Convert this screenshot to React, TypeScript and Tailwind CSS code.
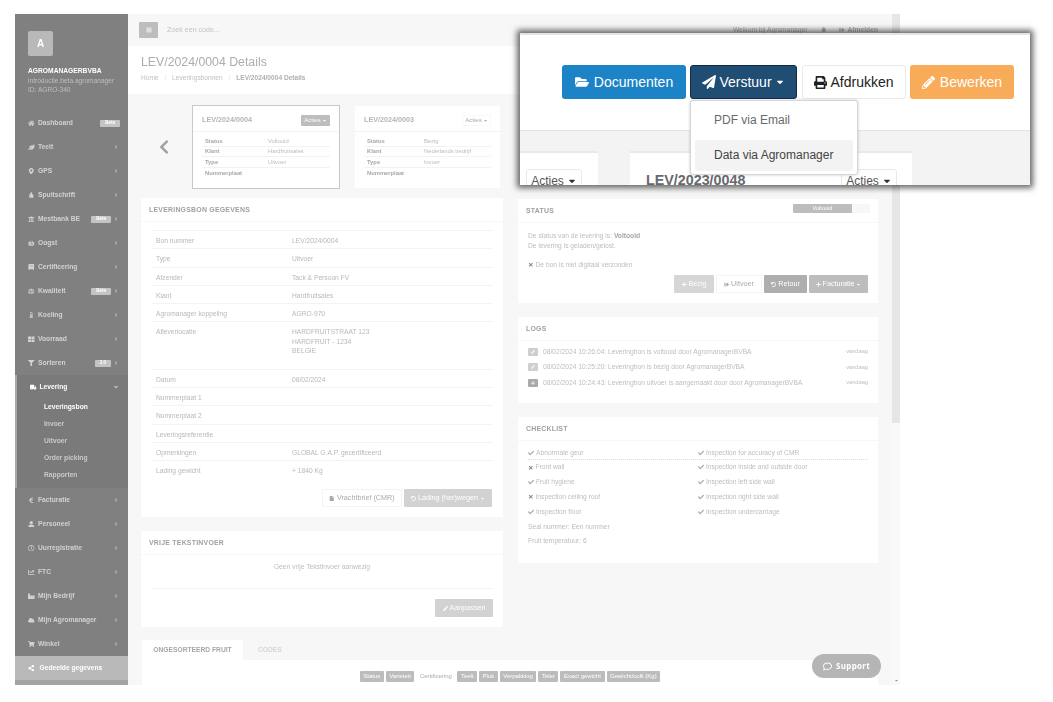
import type { ReactNode } from "react";
import {
  FaAngleDown, FaAngleLeft, FaBalanceScale, FaBars, FaBook, FaCaretDown, FaChartLine, FaCheck, FaChevronLeft, FaCloud,
  FaEuroSign, FaFile, FaFilter, FaFolderOpen, FaHome, FaIndustry, FaLeaf, FaMapMarkerAlt, FaPaperPlane, FaPencilAlt,
  FaPlus, FaPrint, FaRegClock, FaRegComment, FaShareAlt, FaShoppingBasket, FaShoppingCart, FaSignOutAlt, FaThLarge,
  FaThermometerHalf, FaTimes, FaTint, FaTruck, FaUndo, FaUniversity, FaUser, FaArrowLeft, FaBell,
} from "react-icons/fa";

const Item = ({ icon, label, badge, wide }: { icon: ReactNode; label: string; badge?: string; wide?: boolean }) => (
  <div className="h-6 flex items-center pl-[13px] pr-[9px] text-[6.7px] font-bold text-[#d2d2d2]">
    <span className="text-[6.5px] mr-[3px] flex w-[7px] justify-center">{icon}</span>
    <span>{label}</span>
    <span className="flex-1" />
    {badge && (
      <span className={`${wide ? "mr-[2px]" : "-mr-px"} h-[7px] px-[5px] rounded-[1px] bg-[#c4c4c4] text-white text-[4.5px] flex items-center`}>{badge}</span>
    )}
    {wide !== false && <FaAngleLeft className="text-[6px] text-[#b5b5b5]" />}
  </div>
);

const Sidebar = () => (
  <aside className="w-[113px] shrink-0 h-full bg-[#808080] flex flex-col">
    <div className="h-[97px] pl-[13px] pt-[17px]">
      <div className="w-[25px] h-[25px] rounded-[2px] bg-[#b9b9b9] text-white font-bold text-[10px] flex items-center justify-center">A</div>
      <p className="mt-[10px] text-[6.7px] leading-[9.5px] font-bold text-white">AGROMANAGERBVBA</p>
      <p className="text-[6.6px] leading-[9.5px] text-[#bdbdbd]">introductie.beta.agromanager</p>
      <p className="text-[6.6px] leading-[9.5px] text-[#bdbdbd]">ID: AGRO-340</p>
    </div>
    <Item icon={<FaHome />} label="Dashboard" badge="Beta" wide={false} />
    <Item icon={<FaLeaf />} label="Teelt" />
    <Item icon={<FaMapMarkerAlt />} label="GPS" />
    <Item icon={<FaTint />} label="Spuitschrift" />
    <Item icon={<FaUniversity />} label="Mestbank BE" badge="Bèta" wide />
    <Item icon={<FaShoppingBasket />} label="Oogst" />
    <Item icon={<FaBook />} label="Certificering" />
    <Item icon={<FaBalanceScale />} label="Kwaliteit" badge="Bèta" wide />
    <Item icon={<FaThermometerHalf />} label="Koeling" />
    <Item icon={<FaThLarge />} label="Voorraad" />
    <Item icon={<FaFilter />} label="Sorteren" badge="2.0" wide />
    <div className="h-[113px] bg-[#7a7a7a] border-l-[2px] border-[#a9a9a9]">
      <div className="h-6 flex items-center pl-[13px] pr-[9px] text-[6.7px] font-bold text-white">
        <FaTruck className="text-[6.5px] mr-[3px]" />
        <span className="flex-1">Levering</span>
        <FaAngleDown className="text-[6px] text-[#d0d0d0]" />
      </div>
      {["Leveringsbon", "Invoer", "Uitvoer", "Order picking", "Rapporten"].map((s, i) => (
        <div key={s} className={`h-[17px] flex items-center pl-[27px] text-[6.7px] font-bold ${i === 0 ? "text-white" : "text-[#c9c9c9]"}`}>{s}</div>
      ))}
    </div>
    <Item icon={<FaEuroSign />} label="Facturatie" />
    <Item icon={<FaUser />} label="Personeel" />
    <Item icon={<FaRegClock />} label="Uurregistratie" />
    <Item icon={<FaChartLine />} label="FTC" />
    <Item icon={<FaIndustry />} label="Mijn Bedrijf" />
    <Item icon={<FaCloud />} label="Mijn Agromanager" />
    <Item icon={<FaShoppingCart />} label="Winkel" />
    <div className="h-6 shrink-0 flex items-center pl-[13px] bg-[#b9b9b9] text-[6.7px] font-bold text-white">
      <FaShareAlt className="text-[6.5px] mr-[5px]" /> Gedeelde gegevens
    </div>
    <div className="flex-1 bg-[#a3a3a3]" />
  </aside>
);

const MiniRow = ({ label, value, last, active }: { label: string; value?: string; last?: boolean; active?: boolean }) => (
  <div className={`h-[10.7px] flex items-center pl-[3px] text-[5.8px] ${last ? "" : "border-b border-[#f2f2f2]"}`}>
    <span className={`${active ? "w-[63px]" : "w-[57px]"} font-bold text-[#a8a8a8]`}>{label}</span>
    <span className="text-[#bcbcbc]">{value}</span>
  </div>
);

const MiniCard = ({ code, rows, active }: { code: string; rows: string[]; active?: boolean }) => (
  <div className={`bg-white ${active ? "w-[148px] h-[84px] border border-[#c9c9c9]" : "w-[145px] h-[82px] mt-px"}`}>
    <div className="h-[26px] pt-[3px] flex items-center justify-between px-[9px] border-b border-[#f2f2f2]">
      <span className="text-[7.2px] font-bold text-[#b5b5b5]">{code}</span>
      {active ? (
        <span className="h-[11px] w-[29px] rounded-[1px] bg-[#bdbdbd] text-white text-[6px] flex items-center justify-center gap-px">
          Acties <FaCaretDown className="text-[5px]" />
        </span>
      ) : (
        <span className="h-[11px] w-[29px] border border-[#f8f8f8] text-[#aaa] text-[6px] flex items-center justify-center gap-px">
          Acties <FaCaretDown className="text-[5px]" />
        </span>
      )}
    </div>
    <div className="px-[9px] pt-[4px]">
      <MiniRow active={active} label="Status" value={rows[0]} />
      <MiniRow active={active} label="Klant" value={rows[1]} />
      <MiniRow active={active} label="Type" value={rows[2]} />
      <MiniRow active={active} label="Nummerplaat" last />
    </div>
  </div>
);

const Panel = ({ title, className, children }: { title: string; className: string; children: ReactNode }) => (
  <section className={`bg-white flex flex-col ${className}`}>
    <h2 className="h-[24px] pt-[2px] shrink-0 flex items-center pl-2 border-b border-[#f7f7f7] text-[6.9px] font-bold tracking-[0.25px] text-[#a0a0a0]">{title}</h2>
    {children}
  </section>
);

const Row = ({ label, children, tall }: { label: string; children?: ReactNode; tall?: boolean }) => (
  <div className={`flex border-t border-[#f3f3f3] pt-[5px] text-[6.7px] leading-[9.5px] text-[#b8b8b8] ${tall ? "h-[47.5px]" : "h-[18.25px]"}`}>
    <span className="w-[141px] pl-[5px] shrink-0">{label}</span>
    <span>{children}</span>
  </div>
);

const SoftBtn = ({ children, className }: { children: ReactNode; className: string }) => (
  <span className={`h-[18px] rounded-[1px] text-[7.2px] flex items-center justify-center gap-[2px] ${className}`}>{children}</span>
);

const Check = ({ label, off }: { label: string; off?: boolean }) => (
  <p className="h-[14.8px] flex items-center gap-[2px] text-[6.7px] text-[#bdbdbd]">
    {off ? <FaTimes className="text-[5.5px] text-[#888]" /> : <FaCheck className="text-[6px] text-[#aaa]" />}
    {label}
  </p>
);

const LogLine = ({ text, plus }: { text: string; plus?: boolean }) => (
  <div className="h-[15.5px] flex items-center text-[6.7px] text-[#bdbdbd]">
    <span className={`w-[10px] h-[8px] rounded-[1px] mr-[5px] flex items-center justify-center text-white text-[4px] ${plus ? "bg-[#aaaaaa]" : "bg-[#cfcfcf]"}`}>
      {plus ? <FaPlus /> : <FaPencilAlt />}
    </span>
    <span className="flex-1">{text}</span>
    <span className="text-[5.7px]">vandaag</span>
  </div>
);

const Tag = ({ label, plain }: { label: string; plain?: boolean }) => (
  <span className={`h-[11px] px-[3.5px] rounded-[1px] text-[6px] flex items-center ${plain ? "bg-white text-[#aaa]" : "bg-[#bcbcbc] text-white"}`}>{label}</span>
);

const Main = () => (
  <div className="flex-1 min-w-0 h-full flex flex-col bg-[#f7f7f7] overflow-hidden">
    <div className="h-[32px] shrink-0 flex items-center pl-[11px] pr-[14px]">
      <span className="w-[19px] h-[16px] rounded-[1px] bg-[#bdbdbd] text-white text-[6px] flex items-center justify-center"><FaBars /></span>
      <span className="ml-[9px] text-[7.1px] text-[#c4c4c4]">Zoek een code...</span>
      <span className="flex-1" />
      <span className="text-[6.7px] text-[#b0b0b0]">Welkom bij Agromanager</span>
      <FaBell className="mx-[13px] text-[5.5px] text-[#b0b0b0]" />
      <FaSignOutAlt className="mr-[3px] text-[5.5px] text-[#b0b0b0]" />
      <span className="text-[6.7px] font-bold text-[#b0b0b0]">Afmelden</span>
    </div>
    <div className="h-[48px] shrink-0 bg-white pl-[13px] pt-[9px]">
      <h1 className="text-[12.3px] leading-[14px] text-[#adadad]">LEV/2024/0004 Details</h1>
      <p className="mt-[4px] text-[6.6px] leading-[9px] text-[#c0c0c0]">
        Home <span className="mx-[4px] text-[#ddd]">/</span> Leveringsbonnen <span className="mx-[4px] text-[#ddd]">/</span> <b className="text-[#b0b0b0]">LEV/2024/0004 Details</b>
      </p>
    </div>
    <div className="flex-1 px-[13px] flex gap-[15px] items-start">
      <div className="w-[362px] shrink-0 flex flex-col">
        <div className="h-[104px] pt-[11px] flex">
          <div className="w-[51px] h-[84px] flex items-center pl-[15px] text-[#a2a2a2] text-[16px]"><FaChevronLeft /></div>
          <MiniCard code="LEV/2024/0004" rows={["Voltooid", "Hardfruitsales", "Uitvoer"]} active />
          <span className="w-[15px]" />
          <MiniCard code="LEV/2024/0003" rows={["Bezig", "Nederlands bedrijf", "Invoer"]} />
        </div>
        <Panel title="LEVERINGSBON GEGEVENS" className="h-[319px]">
          <div className="px-[10px] pt-[8px]">
            <Row label="Bon nummer">LEV/2024/0004</Row>
            <Row label="Type">Uitvoer</Row>
            <Row label="Afzender">Tack &amp; Persoon FV</Row>
            <Row label="Klant">Hardfruitsales</Row>
            <Row label="Agromanager koppeling">AGRO-970</Row>
            <Row label="Afleverlocatie" tall>HARDFRUITSTRAAT 123<br />HARDFRUIT - 1234<br />BELGIE</Row>
            <Row label="Datum">08/02/2024</Row>
            <Row label="Nummerplaat 1" />
            <Row label="Nummerplaat 2" />
            <Row label="Leveringsreferentie" />
            <Row label="Opmerkingen">GLOBAL G.A.P. gecertificeerd</Row>
            <Row label="Lading gewicht">+ 1840 Kg</Row>
          </div>
          <div className="mt-[11px] px-[11px] flex justify-end gap-[2px]">
            <SoftBtn className="w-[80px] bg-white border border-[#f3f3f3] text-[#aaa]"><FaFile className="text-[5.5px]" /> Vrachtbrief (CMR)</SoftBtn>
            <SoftBtn className="w-[88px] bg-[#d2d2d2] text-white"><FaUndo className="text-[5px]" /> Lading (her)wegen <FaCaretDown className="text-[5px]" /></SoftBtn>
          </div>
        </Panel>
        <Panel title="VRIJE TEKSTINVOER" className="mt-[14px] h-[96px]">
          <p className="pt-[7px] text-center text-[6.7px] text-[#bdbdbd]">Geen vrije Tekstinvoer aanwezig</p>
          <div className="mt-[16px] mx-[10px] border-t border-[#f3f3f3] pt-[10px] flex justify-end">
            <SoftBtn className="w-[58px] bg-[#d2d2d2] text-white"><FaPencilAlt className="text-[5px]" /> Aanpassen</SoftBtn>
          </div>
        </Panel>
      </div>
      <div className="w-[360px] shrink-0 flex flex-col pt-[105px]">
        <Panel title="STATUS" className="h-[104px]">
          <div className="-mt-[19px] ml-auto mr-[8px] w-[77px] h-[9px] bg-[#f7f7f7] mb-[10px]">
            <div className="w-[59px] h-full rounded-[1px] bg-[#bdbdbd] text-white text-[5.6px] flex items-center justify-center">Voltooid</div>
          </div>
          <div className="px-[10px] pt-[8px] text-[6.7px] leading-[9.5px] text-[#bdbdbd]">
            <p>De status van de levering is: <b className="text-[#a5a5a5]">Voltooid</b></p>
            <p>De levering is geladen/gelost.</p>
            <p className="mt-[9.5px] flex items-center gap-[2px]"><FaTimes className="text-[5.5px] text-[#888]" /> De bon is niet digitaal verzonden</p>
          </div>
          <div className="mt-[6px] pr-[10px] flex justify-end gap-[2px]">
            <SoftBtn className="w-[40px] bg-[#d6d6d6] text-white"><FaArrowLeft className="text-[5px]" /> Bezig</SoftBtn>
            <SoftBtn className="w-[46px] bg-white border border-[#f3f3f3] text-[#aaa]"><FaSignOutAlt className="text-[5px]" /> Uitvoer</SoftBtn>
            <SoftBtn className="w-[43px] bg-[#aeaeae] text-white"><FaUndo className="text-[5px]" /> Retour</SoftBtn>
            <SoftBtn className="w-[59px] bg-[#bdbdbd] text-white"><FaPlus className="text-[5px]" /> Facturatie <FaCaretDown className="text-[5px]" /></SoftBtn>
          </div>
        </Panel>
        <Panel title="LOGS" className="mt-[14px] h-[86px]">
          <div className="px-[10px] pt-[3px]">
            <LogLine text="08/02/2024 10:26:04: Leveringbon is voltooid door AgromanagerBVBA" />
            <LogLine text="08/02/2024 10:25:20: Leveringbon is bezig door AgromanagerBVBA" />
            <LogLine plus text="08/02/2024 10:24:43: Leveringbon uitvoer is aangemaakt door door AgromanagerBVBA" />
          </div>
        </Panel>
        <Panel title="CHECKLIST" className="mt-[14px] h-[146px]">
          <div className="px-[10px] pt-[5px] grid grid-cols-2 gap-x-0">
            <div className="col-span-2 grid grid-cols-2 border-b border-dotted border-[#dcdcdc] h-[14px]">
              <Check label="Abnormale geur" />
              <Check label="Inspection for accuracy of CMR" />
            </div>
            <Check off label="Front wall" />
            <Check label="Inspection inside and outside door" />
            <Check label="Fruit hygiene" />
            <Check label="Inspection left side wall" />
            <Check off label="Inspection ceiling roof" />
            <Check label="Inspection right side wall" />
            <Check label="Inspection floor" />
            <Check label="Inspection undercarriage" />
            <p className="col-span-2 h-[14.8px] flex items-center text-[6.7px] text-[#bdbdbd]">Seal nummer: Een nummer</p>
            <p className="col-span-2 h-[14.8px] flex items-center text-[6.7px] text-[#bdbdbd]">Fruit temperatuur: 6</p>
          </div>
        </Panel>
      </div>
    </div>
  </div>
);

const Tabs = () => (
  <div className="absolute left-[127px] top-[626px] w-[736px] h-[45px] flex flex-col">
    <div className="h-[20px] flex items-center text-[6.7px] font-bold">
      <span className="w-[101px] h-full bg-white flex items-center justify-center text-[#a6a6a6]">ONGESORTEERD FRUIT</span>
      <span className="ml-[15px] text-[#d5d5d5]">CODES</span>
    </div>
    <div className="flex-1 bg-white flex justify-center gap-[2px] pt-[11px]">
      {["Status", "Varieteit"].map(t => <Tag key={t} label={t} />)}
      <Tag plain label="Certificering" />
      {["Teelt", "Pluk", "Verpakking", "Teler", "Exact gewicht", "Gewicht/colli (Kg)"].map(t => <Tag key={t} label={t} />)}
    </div>
  </div>
);

const Popup = () => (
  <div className="absolute left-[520px] top-[33px] w-[510px] h-[152px] bg-white border-t-2 border-[#e4e4e4] shadow-[0_0_6px_3px_rgba(0,0,0,0.6)] font-['Liberation_Sans',sans-serif] overflow-hidden flex flex-col">
    <div className="h-[95px] shrink-0 pt-[30px] pr-[16px] flex justify-end">
      <button className="w-[124px] h-[34px] rounded-[3px] bg-[#1c84c6] text-white text-[14px] flex items-center justify-center gap-[5px]"><FaFolderOpen className="text-[14px]" /> Documenten</button>
      <button className="ml-[4px] w-[107px] h-[34px] rounded-[3px] bg-[#204d74] border border-[#122b40] text-white text-[14px] flex items-center justify-center gap-[3px]"><FaPaperPlane className="text-[14px]" /> Verstuur <FaCaretDown className="text-[10px]" /></button>
      <button className="ml-[5px] w-[104px] h-[34px] rounded-[3px] bg-white border border-[#e7eaec] text-[#222] text-[14px] flex items-center justify-center gap-[3px]"><FaPrint className="text-[13px]" /> Afdrukken</button>
      <button className="ml-[4px] w-[104px] h-[34px] rounded-[3px] bg-[#f8ac59] text-white text-[14px] flex items-center justify-center gap-[5px]"><FaPencilAlt className="text-[13px]" /> Bewerken</button>
    </div>
    <div className="flex-1 bg-[#f3f3f3] border-t border-[#e2e2e2] pt-[20px] flex">
      <div className="w-[78px] bg-white border-t-2 border-[#e7eaec] pt-[16px] pl-[6px]">
        <span className="w-[56px] h-[24px] bg-white border border-[#e7eaec] rounded-[3px] text-[12px] text-[#555] flex items-center justify-center gap-[3px]">Acties <FaCaretDown className="text-[10px] text-[#333]" /></span>
      </div>
      <div className="ml-[32px] w-[282px] bg-white border-t-2 border-[#e7eaec] pl-[16px] pr-[15px] pt-[19px] flex justify-between items-start">
        <b className="text-[14.3px] leading-[16px] text-[#676a6c]">LEV/2023/0048</b>
        <span className="w-[56px] h-[24px] bg-white border border-[#e7eaec] rounded-[3px] text-[12px] text-[#555] flex items-center justify-center gap-[3px] -mt-[3px]">Acties <FaCaretDown className="text-[10px] text-[#333]" /></span>
      </div>
    </div>
    <div className="absolute left-[170px] top-[65px] w-[168px] h-[75px] bg-white border border-[#d6d6d6] rounded-[3px] shadow-[0_0_3px_rgba(86,96,117,0.35)] px-[4px]">
      <p className="h-[37px] mb-[2px] pl-[19px] flex items-center text-[12px] text-[#676a6c]">PDF via Email</p>
      <p className="h-[31px] pl-[19px] pb-px rounded-[3px] bg-[#f3f3f3] flex items-center text-[12px] text-[#444]">Data via Agromanager</p>
    </div>
  </div>
);

export default function App() {
  return (
    <div className="relative w-[1053px] h-[702px] bg-white overflow-hidden pt-[14px] pl-[15px] font-['Liberation_Sans',Arial,sans-serif]">
      <div className="relative w-[885px] h-[671px] flex blur-[0.3px]">
        <Sidebar />
        <Main />
        <div className="w-[8px] h-full bg-[#f9f9f9] flex flex-col">
          <div className="h-[409px] bg-[#e6e6e6]" />
          <span className="flex-1" />
          <FaCaretDown className="text-[5px] text-[#999] mx-auto mb-[2px]" />
        </div>
        <Tabs />
        <div className="absolute left-[797px] top-[640px] w-[69px] h-[24px] rounded-full bg-[#b5b5b5] text-white text-[8px] font-bold font-['Open_Sans',sans-serif] tracking-[0.3px] flex items-center justify-center gap-[4px]">
          <FaRegComment className="text-[9px]" /> Support
        </div>
      </div>
      <Popup />
    </div>
  );
}
